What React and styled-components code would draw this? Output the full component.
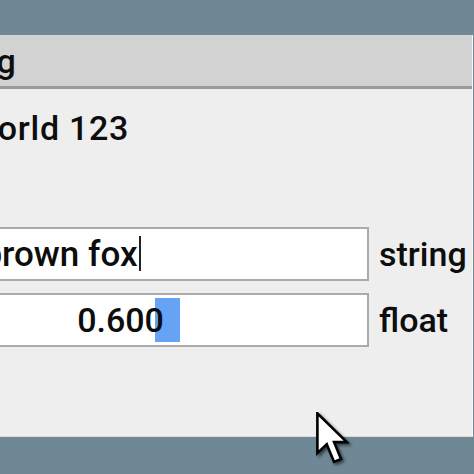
import React from 'react';
import styled, { createGlobalStyle } from 'styled-components';

const GlobalStyle = createGlobalStyle`
  html, body {
    margin: 0;
    padding: 0;
    background: #6f8896;
    overflow: hidden;
  }
`;

const Screen = styled.div`
  position: relative;
  width: 474px;
  height: 474px;
  overflow: hidden;
  display: flex;
  flex-direction: column;
  background: #6f8896;
  font-family: Roboto, "Liberation Sans", sans-serif;
  font-weight: 500;
  color: #0d0d0d;
`;

const Desktop = styled.div`
  height: 35px;
  flex-shrink: 0;
`;

const Window = styled.div`
  margin-left: -160px;
  width: 632px;
  height: 401px;
  flex-shrink: 0;
  display: flex;
  flex-direction: column;
  background: #eeeeee;
  border-right: 1px solid #f8f8f8;
  border-bottom: 1px solid #e3d9cc;
`;

const TitleBar = styled.div`
  height: 50px;
  flex-shrink: 0;
  display: flex;
  align-items: center;
  padding-left: 78px;
  background: #d2d2d2;
  border-top: 1px solid #dcd3d3;
  border-bottom: 3px solid #9a9a9a;
  font-size: 34px;
`;

const Body = styled.div`
  display: flex;
  flex-direction: column;
  padding: 21px 0 0 32px;
`;

const Text = styled.div`
  font-size: 34px;
  letter-spacing: 0.7px;
  line-height: 36px;
  height: 36px;
  white-space: nowrap;
`;

const Button = styled.div`
  margin-top: 12px;
  width: 100px;
  height: 54px;
  display: flex;
  align-items: center;
  justify-content: center;
  background: #c9d8e6;
  font-size: 34px;
`;

const Row = styled.div`
  display: flex;
  align-items: center;
  gap: 10px;
  margin-top: ${({ $gap }) => $gap}px;
`;

const Frame = styled.div`
  position: relative;
  box-sizing: border-box;
  width: 497px;
  height: 54px;
  display: flex;
  align-items: center;
  justify-content: ${({ $center }) => ($center ? 'center' : 'flex-start')};
  padding: 0 ${({ $center }) => ($center ? 10 : 15)}px;
  background: #ffffff;
  border: 2px solid #ababab;
  font-size: ${({ $center }) => ($center ? 34 : 35)}px;
  white-space: nowrap;
`;

const Value = styled.span`
  position: relative;
  z-index: 1;
`;

const Caret = styled.span`
  display: inline-block;
  width: 2px;
  height: 35px;
  margin-left: 1px;
  vertical-align: -5px;
  background: #222;
`;

const Grab = styled.div`
  position: absolute;
  top: 3px;
  bottom: 3px;
  width: 25px;
  background: #66a3f5;
`;

const Label = styled.span`
  font-size: 34px;
`;

const Pointer = styled.svg`
  position: absolute;
  left: 316px;
  top: 412px;
  filter: drop-shadow(2px 2px 1.5px rgba(0, 0, 0, 0.55));
`;

function SliderFloat({ value, min, max, label }) {
  const frameW = 497;
  const grabW = 25;
  const t = (value - min) / (max - min);
  const left = 0.5 + t * (frameW - 4 - grabW);
  return (
    <Row $gap={12}>
      <Frame $center>
        <Grab style={{ left }} />
        <Value>{value.toFixed(3)}</Value>
      </Frame>
      <Label>{label}</Label>
    </Row>
  );
}

export default function App() {
  return (
    <>
      <GlobalStyle />
      <Screen>
        <Desktop />
        <Window>
          <TitleBar>Debug</TitleBar>
          <Body>
            <Text>Hello, world 123</Text>
            <Button>Save</Button>
            <Row $gap={15}>
              <Frame>
                <Value>
                  quick brown fox
                  <Caret />
                </Value>
              </Frame>
              <Label>string</Label>
            </Row>
            <SliderFloat value={0.6} min={0} max={1} label="float" />
          </Body>
        </Window>
        <Pointer width="34" height="52" viewBox="0 0 13 20">
          <path
            d="M0.5 0.5 V15.8 L4.1 12.4 L6.9 19.2 L9.6 18.1 L6.9 11.6 H11.8 Z"
            fill="#fff"
            stroke="#000"
            strokeWidth="1"
            strokeLinejoin="miter"
          />
        </Pointer>
      </Screen>
    </>
  );
}
